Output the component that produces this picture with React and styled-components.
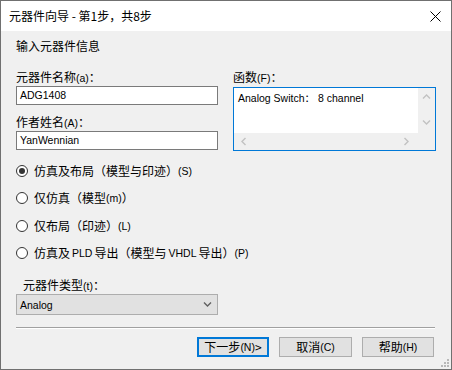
import React from "react";
import styled, { createGlobalStyle } from "styled-components";

const GlobalStyle = createGlobalStyle`
  html, body {
    margin: 0;
    padding: 0;
    background: #f0f0f0;
  }
  body {
    font-family: "Noto Sans CJK SC", "Liberation Sans", sans-serif;
    font-size: 12px;
    color: #000;
  }
`;

const Window = styled.div`
  width: 452px;
  height: 370px;
  box-sizing: border-box;
  border: 1px solid #707070;
  display: flex;
  flex-direction: column;
  background: #f0f0f0;
  position: relative;
`;

const TitleBar = styled.div`
  height: 30px;
  flex: none;
  background: #fff;
  display: flex;
  align-items: center;
  justify-content: space-between;
  padding: 0 10px 0 8px;
  line-height: 16px;
`;

const Body = styled.div`
  flex: 1;
  display: flex;
  flex-direction: column;
  padding: 7px 15px 0 15px;
`;

const Text = styled.div`
  line-height: 16px;
  height: 16px;
  white-space: nowrap;
  margin-top: ${(p) => p.$mt || 0}px;
  margin-left: ${(p) => p.$ml || 0}px;
`;

const Mn = styled.span`
  font-family: "Liberation Sans", sans-serif;
  font-size: 10.5px;
  margin: 0 ${(p) => (p.$spaced ? 2 : 0)}px;
`;

const Fields = styled.div`
  display: grid;
  grid-template-columns: 202px 203px;
  column-gap: 15px;
  margin-top: 15px;
`;

const Column = styled.div`
  display: flex;
  flex-direction: column;
`;

const Input = styled.div`
  box-sizing: border-box;
  height: 19px;
  margin-top: 1px;
  background: #fff;
  border: 1px solid #7a7a7a;
  padding: 0 3px;
  font-family: "Liberation Sans", sans-serif;
  font-size: 10.5px;
  line-height: 17px;
`;

const FuncBox = styled.div`
  box-sizing: border-box;
  height: 64px;
  margin-top: 2px;
  border: 1px solid #0078d7;
  display: grid;
  grid-template-columns: 1fr 17px;
  grid-template-rows: 1fr 17px;
  background: #f0f0f0;
`;

const FuncText = styled.div`
  background: #fff;
  padding: 2px 4px;
  line-height: 16px;
  white-space: nowrap;
  font-family: "Liberation Sans", "Noto Sans CJK SC", sans-serif;
  font-size: 10.5px;
`;

const VScroll = styled.div`
  display: flex;
  flex-direction: column;
  justify-content: space-between;
  align-items: center;
  padding: 5px 0 6px;
`;

const HScroll = styled.div`
  display: flex;
  justify-content: space-between;
  align-items: center;
  padding: 0 7px 0 6px;
`;

const Radios = styled.div`
  display: flex;
  flex-direction: column;
  margin-top: 6px;
`;

const RadioRow = styled.div`
  height: 27.5px;
  display: flex;
  align-items: center;
  white-space: nowrap;
  line-height: 16px;
`;

const RadioCircle = styled.span`
  box-sizing: border-box;
  flex: none;
  width: 12px;
  height: 12px;
  border-radius: 50%;
  border: 1px solid #333;
  background: #fff;
  margin-right: 6px;
  display: flex;
  align-items: center;
  justify-content: center;
  &::after {
    content: "";
    width: 6px;
    height: 6px;
    border-radius: 50%;
    background: ${(p) => (p.$checked ? "#333" : "transparent")};
  }
`;

const Select = styled.div`
  box-sizing: border-box;
  width: 202px;
  height: 21px;
  margin-top: 1px;
  background: #e1e1e1;
  border: 1px solid #adadad;
  display: flex;
  align-items: center;
  justify-content: space-between;
  padding: 0 5px 0 3px;
  line-height: 16px;
  font-family: "Liberation Sans", sans-serif;
  font-size: 10.5px;
`;

const Separator = styled.div`
  height: 1px;
  margin: 12px 1px 0 0;
  background: #a0a0a0;
  box-shadow: 0 1px 0 #fff;
`;

const Buttons = styled.div`
  display: flex;
  justify-content: flex-end;
  gap: 10px;
  margin: 9px 2px 0 0;
`;

const Button = styled.div`
  box-sizing: border-box;
  width: ${(p) => p.$w}px;
  height: 20px;
  background: #e1e1e1;
  border: ${(p) => (p.$default ? "2px solid #0078d7" : "1px solid #adadad")};
  display: flex;
  align-items: center;
  justify-content: center;
  line-height: 16px;
  white-space: nowrap;
`;

const Grip = styled.svg`
  position: absolute;
  right: 1px;
  bottom: 1px;
`;

const Chevron = ({ dir, color = "#c2c2c2" }) => {
  const paths = {
    up: "M1 5.5 L4.5 2 L8 5.5",
    down: "M1 2.5 L4.5 6 L8 2.5",
    left: "M5.5 1 L2 4.5 L5.5 8",
    right: "M2.5 1 L6 4.5 L2.5 8",
  };
  return (
    <svg width="9" height="9" viewBox="0 0 9 9">
      <path d={paths[dir]} fill="none" stroke={color} strokeWidth="1.4" />
    </svg>
  );
};

const radios = [
  { label: <>仿真及布局（模型与印迹）<Mn>(S)</Mn></>, checked: true },
  { label: <>仅仿真（模型<Mn>(m)</Mn>）</> },
  { label: <>仅布局（印迹）<Mn>(L)</Mn></> },
  {
    label: (
      <>
        仿真及<Mn $spaced>PLD</Mn>导出（模型与<Mn $spaced>VHDL</Mn>导出）<Mn>(P)</Mn>
      </>
    ),
  },
];

export default function App() {
  return (
    <>
      <GlobalStyle />
      <Window>
        <TitleBar>
          <span>元器件向导 - 第1步，共8步</span>
          <svg width="11" height="11" viewBox="0 0 11 11">
            <path d="M0.5 0.5 L10.5 10.5 M10.5 0.5 L0.5 10.5" stroke="#000" strokeWidth="1" />
          </svg>
        </TitleBar>
        <Body>
          <Text>输入元器件信息</Text>
          <Fields>
            <Column>
              <Text>元器件名称<Mn>(a)</Mn>：</Text>
              <Input>ADG1408</Input>
              <Text $mt={9}>作者姓名<Mn>(A)</Mn>：</Text>
              <Input>YanWennian</Input>
            </Column>
            <Column>
              <Text>函数<Mn>(F)</Mn>：</Text>
              <FuncBox>
                <FuncText>Analog Switch： 8 channel</FuncText>
                <VScroll>
                  <Chevron dir="up" />
                  <Chevron dir="down" />
                </VScroll>
                <HScroll>
                  <Chevron dir="left" />
                  <Chevron dir="right" />
                </HScroll>
                <div />
              </FuncBox>
            </Column>
          </Fields>
          <Radios>
            {radios.map((r, i) => (
              <RadioRow key={i}>
                <RadioCircle $checked={r.checked} />
                {r.label}
              </RadioRow>
            ))}
          </Radios>
          <Text $mt={10} $ml={7}>元器件类型<Mn>(t)</Mn>：</Text>
          <Select>
            <span>Analog</span>
            <Chevron dir="down" color="#606060" />
          </Select>
          <Separator />
          <Buttons>
            <Button $w={72} $default>下一步<Mn>(N)</Mn>&gt;</Button>
            <Button $w={73}>取消<Mn>(C)</Mn></Button>
            <Button $w={72}>帮助<Mn>(H)</Mn></Button>
          </Buttons>
        </Body>
        <Grip width="10" height="10" viewBox="0 0 10 10">
          <g fill="#b8b8b8">
            <rect x="7" y="1" width="2" height="2" />
            <rect x="4" y="4" width="2" height="2" />
            <rect x="7" y="4" width="2" height="2" />
            <rect x="1" y="7" width="2" height="2" />
            <rect x="4" y="7" width="2" height="2" />
            <rect x="7" y="7" width="2" height="2" />
          </g>
        </Grip>
      </Window>
    </>
  );
}
